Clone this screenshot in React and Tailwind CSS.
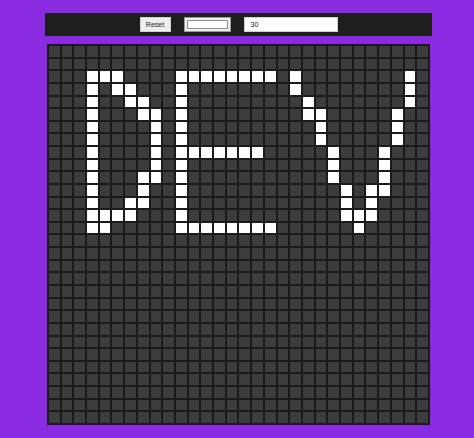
import React, { useState } from 'react';

const SIZE = 30;

// lit cells spelling DEV, as [row, col]
const LIT = [
  // D
  ...[2, 3, 4, 5, 6, 7, 8, 9, 10, 11, 12, 13, 14].map(r => [r, 3]),
  [2, 4], [2, 5], [3, 5], [3, 6], [4, 6], [4, 7], [5, 7], [5, 8],
  [6, 8], [7, 8], [8, 8], [9, 8], [10, 8], [10, 7], [11, 7], [12, 7], [12, 6],
  [13, 6], [13, 5], [13, 4], [14, 4],
  // E
  ...[2, 3, 4, 5, 6, 7, 8, 9, 10, 11, 12, 13, 14].map(r => [r, 10]),
  ...[11, 12, 13, 14, 15, 16, 17].map(c => [2, c]),
  ...[11, 12, 13, 14, 15, 16].map(c => [8, c]),
  ...[11, 12, 13, 14, 15, 16, 17].map(c => [14, c]),
  // V
  [2, 19], [3, 19], [4, 20], [5, 20], [5, 21], [6, 21], [7, 21],
  [8, 22], [9, 22], [10, 22], [11, 23], [12, 23], [13, 23], [13, 24], [14, 24],
  [2, 28], [3, 28], [4, 28], [5, 27], [6, 27], [7, 27], [8, 26], [9, 26],
  [10, 26], [11, 26], [11, 25], [12, 25], [13, 25],
];

const initial = () => {
  const set = new Set(LIT.map(([r, c]) => r * SIZE + c));
  return Array.from({ length: SIZE * SIZE }, (_, i) => set.has(i));
};

export default function App() {
  const [cells, setCells] = useState(initial);

  const toggle = (i) => setCells(prev => prev.map((v, j) => (j === i ? !v : v)));

  return (
    <div className="min-h-screen bg-[#8a2be2] pt-[13px] pl-[45px] font-['Liberation_Sans',Arial,sans-serif]">
      <div className="w-[387px] h-[23px] bg-[#1e1e1e] flex items-center justify-center gap-[13px]">
        <button
          onClick={() => setCells(Array(SIZE * SIZE).fill(false))}
          className="w-[31px] h-[15px] bg-[#efefef] border border-[#d0d0d0] text-[7px] text-[#222] leading-none flex items-center justify-center"
        >
          Reset
        </button>
        <div className="w-[47px] h-[15px] bg-[#efefef] border border-[#9a9a9a] p-[2px]">
          <div className="w-full h-full bg-white border border-[#8f8f8f]" />
        </div>
        <div className="w-[94px] h-[15px] bg-white border border-[#cfcfcf] text-[7px] text-[#111] leading-none flex items-center pl-[6px]">
          30
        </div>
      </div>

      <div className="mt-[8px] ml-[2px] w-[383px] h-[381px] border border-[#1a1a1a] bg-[#1a1a1a] grid grid-cols-[repeat(30,1fr)] grid-rows-[repeat(30,1fr)]">
        {cells.map((on, i) => (
          <div
            key={i}
            onClick={() => toggle(i)}
            className={`border border-[#1a1a1a] ${on ? 'bg-white' : 'bg-[#3c3c3c]'}`}
          />
        ))}
      </div>
    </div>
  );
}
